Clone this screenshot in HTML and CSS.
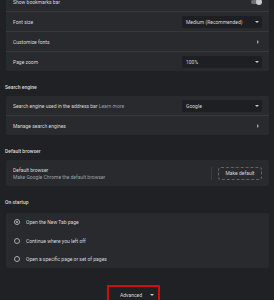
FILE: index.html
```html
<!doctype html>
<html lang="en">

<head>
    <meta charset="utf-8">
    <title>Settings</title>
    <meta name="viewport" content="width=device-width,initial-scale=1">
    <link rel="stylesheet" href="styles.css">
</head>

<body>
    <div class="css-card css-card-first">
        <div class="css-row">
            <span>Show bookmarks bar</span>
            <span class="css-toggle"><span class="css-knob"></span></span>
        </div>
        <div class="css-row">
            <span>Font size</span>
            <span class="css-select">Medium (Recommended)<svg class="css-caret" viewBox="0 0 4 2"><path d="M0 0h4L2 2z" fill="#c8c8c8"/></svg></span>
        </div>
        <div class="css-row">
            <span>Customize fonts</span>
            <svg class="css-chevron" viewBox="0 0 2 4"><path d="M0 0l2 2-2 2z" fill="#a0a0a0"/></svg>
        </div>
        <div class="css-row">
            <span>Page zoom</span>
            <span class="css-select">100%<svg class="css-caret" viewBox="0 0 4 2"><path d="M0 0h4L2 2z" fill="#c8c8c8"/></svg></span>
        </div>
    </div>

    <div class="css-heading">Search engine</div>
    <div class="css-card">
        <div class="css-row">
            <span>Search engine used in the address bar <span class="css-link">Learn more</span></span>
            <span class="css-select">Google<svg class="css-caret" viewBox="0 0 4 2"><path d="M0 0h4L2 2z" fill="#c8c8c8"/></svg></span>
        </div>
        <div class="css-row">
            <span>Manage search engines</span>
            <svg class="css-chevron" viewBox="0 0 2 4"><path d="M0 0l2 2-2 2z" fill="#a0a0a0"/></svg>
        </div>
    </div>

    <div class="css-heading">Default browser</div>
    <div class="css-card">
        <div class="css-row css-row-tall">
            <div>
                <div>Default browser</div>
                <div class="css-sub">Make Google Chrome the default browser</div>
            </div>
            <div class="css-side">
                <span class="css-sep"></span>
                <button class="css-button">Make default</button>
            </div>
        </div>
    </div>

    <div class="css-heading css-heading-startup">On startup</div>
    <div class="css-card css-card-radios">
        <div class="css-radio-row"><span class="css-radio css-checked"></span>Open the New Tab page</div>
        <div class="css-radio-row"><span class="css-radio"></span>Continue where you left off</div>
        <div class="css-radio-row"><span class="css-radio"></span>Open a specific page or set of pages</div>
    </div>

    <div class="css-advanced-wrap">
        <div class="css-advanced">Advanced<svg class="css-caret" viewBox="0 0 4 2"><path d="M0 0h4L2 2z" fill="#c8c8c8"/></svg></div>
    </div>
</body>

</html>
```
FILE: styles.css
```css
html,
body {
    background-color: rgb(32, 33, 36);
    color: rgb(214, 216, 219);
    margin: 0;
    font-family: Roboto, "Liberation Sans", sans-serif;
    font-size: 5px;
    line-height: 6px;
    overflow: hidden;
}

body {
    padding: 0 5px 0 6px;
}

.css-card {
    background-color: rgb(41, 42, 45);
    border-radius: 2px;
}

.css-card-first {
    margin-top: -8px;
}

.css-row {
    display: flex;
    align-items: center;
    justify-content: space-between;
    height: 19px;
    padding: 0 7px;
}

.css-row + .css-row {
    border-top: 1px solid rgb(55, 56, 60);
}

.css-row-tall {
    height: 26px;
}

.css-heading {
    padding: 11px 0 4px 0;
    margin-left: -1px;
    line-height: 10px;
    font-weight: 500;
}

.css-heading-startup {
    padding-bottom: 6px;
}

.css-toggle {
    position: relative;
    width: 10px;
    height: 4px;
    border-radius: 2px;
    background-color: rgb(110, 112, 116);
    margin-right: 1px;
}

.css-knob {
    position: absolute;
    right: -1px;
    top: -1px;
    width: 6px;
    height: 6px;
    border-radius: 50%;
    background-color: rgb(200, 202, 205);
}

.css-select {
    display: flex;
    align-items: center;
    justify-content: space-between;
    width: 73px;
    height: 12px;
    padding: 0 3px 0 4px;
    border-radius: 2px;
    background-color: rgb(30, 31, 34);
}

.css-caret {
    width: 4px;
    height: 2px;
}

.css-chevron {
    width: 2px;
    height: 4px;
    margin-right: 3px;
}

.css-link {
    color: rgb(150, 160, 175);
}

.css-sub {
    color: rgb(154, 160, 166);
    margin-top: 1px;
}

.css-side {
    display: flex;
    align-items: center;
    gap: 6px;
}

.css-sep {
    width: 1px;
    height: 13px;
    background-color: rgb(60, 61, 65);
}

.css-button {
    width: 44px;
    height: 13px;
    border: 1px dashed rgb(95, 99, 104);
    border-radius: 3px;
    background-color: transparent;
    color: rgb(214, 216, 219);
    font-family: inherit;
    font-size: 5px;
    padding: 0;
}

.css-card-radios {
    padding: 0;
}

.css-radio-row {
    display: flex;
    align-items: center;
    height: 18.4px;
    padding-left: 8px;
    gap: 6px;
}

.css-radio {
    box-sizing: border-box;
    width: 6px;
    height: 6px;
    border: 1px solid rgb(170, 172, 176);
    border-radius: 50%;
    display: flex;
    align-items: center;
    justify-content: center;
}

.css-checked::after {
    content: "";
    width: 2px;
    height: 2px;
    border-radius: 50%;
    background-color: rgb(170, 172, 176);
}

.css-advanced-wrap {
    display: flex;
    padding: 17px 0 0 101px;
}

.css-advanced {
    display: flex;
    align-items: center;
    gap: 8px;
    height: 16px;
    padding: 0 4px 0 11px;
    border: 2px solid rgb(204, 16, 16);
    border-bottom: none;
}
```
